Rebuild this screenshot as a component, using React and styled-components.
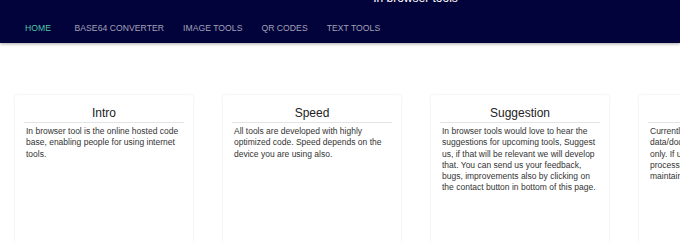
import React from "react";
import styled, { createGlobalStyle } from "styled-components";

const GlobalStyle = createGlobalStyle`
  html, body {
    margin: 0;
    padding: 0;
    background: #ffffff;
    font-family: "Liberation Sans", Arial, Helvetica, sans-serif;
    overflow: hidden;
  }
`;

const Header = styled.header`
  width: 100%;
  height: 43px;
  background-color: #03033b;
  box-shadow: 0 1px 3px rgba(0, 0, 0, 0.35);
  display: flex;
  flex-direction: column;
  overflow: hidden;
`;

const TitleRow = styled.div`
  display: flex;
  justify-content: center;
  padding-left: 151px;
  margin-top: -8px;
  height: 12px;
`;

const Title = styled.h1`
  margin: 0;
  font-size: 12px;
  line-height: 12px;
  font-weight: 400;
  color: #ffffff;
  white-space: nowrap;
`;

const Tabs = styled.nav`
  display: flex;
  align-items: center;
  padding-left: 11px;
  margin-top: 17px;
  height: 13px;
`;

const Tab = styled.a`
  min-width: 54px;
  padding: 0 9.5px;
  box-sizing: border-box;
  text-align: center;
  font-size: 8.6px;
  letter-spacing: 0.05px;
  text-transform: uppercase;
  white-space: nowrap;
  color: ${props => (props.active ? "#4fc7a2" : "#a2a2b8")};
  text-decoration: none;
`;

const Cards = styled.main`
  display: flex;
  gap: 30px;
  padding: 52px 0 0 15px;
  overflow: hidden;
`;

const Card = styled.section`
  flex: 0 0 178px;
  height: 170px;
  box-sizing: border-box;
  padding: 10px 9px 0;
  background: #ffffff;
  border-radius: 2px;
  box-shadow: 0 0 2px rgba(0, 0, 0, 0.12);
`;

const CardTitle = styled.h2`
  margin: 0;
  padding-bottom: 1px;
  font-size: 12px;
  line-height: 16px;
  font-weight: 400;
  text-align: center;
  color: #222222;
  border-bottom: 1px solid #e4e4e4;
  white-space: nowrap;
`;

const CardText = styled.p`
  margin: 3px 0 0;
  padding: 0 1px 0 2px;
  font-size: 8.5px;
  line-height: 11.3px;
  color: #333333;
`;

const tabs = ["Home", "Base64 Converter", "Image Tools", "QR Codes", "Text Tools"];

const cards = [
  {
    title: "Intro",
    text: "In browser tool is the online hosted code base, enabling people for using internet tools."
  },
  {
    title: "Speed",
    text: "All tools are developed with highly optimized code. Speed depends on the device you are using also."
  },
  {
    title: "Suggestion",
    text: "In browser tools would love to hear the suggestions for upcoming tools, Suggest us, if that will be relevant we will develop that. You can send us your feedback, bugs, improvements also by clicking on the contact button in bottom of this page."
  },
  {
    title: "Privacy",
    text: "Currently we are not storing any of your data/documents, all tools work in browser only. If uploading is required for processing, files are removed and we maintain no copy of your data."
  }
];

export default function App() {
  return (
    <>
      <GlobalStyle />
      <Header>
        <TitleRow>
          <Title>In browser tools</Title>
        </TitleRow>
        <Tabs>
          {tabs.map((t, i) => (
            <Tab key={t} href="#" active={i === 0 ? 1 : 0}>
              {t}
            </Tab>
          ))}
        </Tabs>
      </Header>
      <Cards>
        {cards.map(c => (
          <Card key={c.title}>
            <CardTitle>{c.title}</CardTitle>
            <CardText>{c.text}</CardText>
          </Card>
        ))}
      </Cards>
    </>
  );
}
